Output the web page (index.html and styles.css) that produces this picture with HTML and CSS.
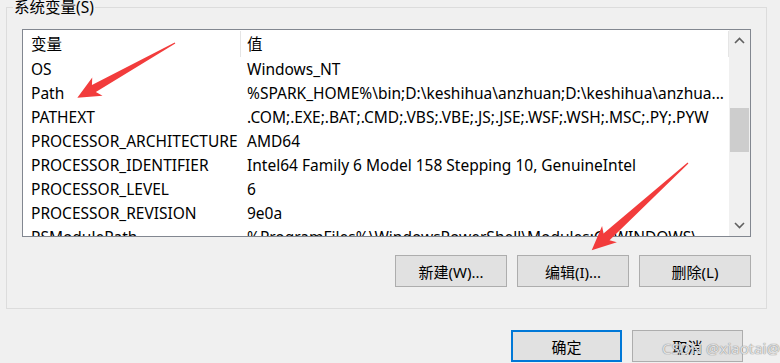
FILE: index.html
```html
<!DOCTYPE html>
<html lang="zh-CN">
<head>
    <meta charset="UTF-8">
    <title>环境变量</title>
    <link rel="stylesheet" href="styles.css">
</head>
<body>
    <!-- 系统变量 -->
    <fieldset class="group">
        <legend>系统变量(S)</legend>
        <div class="group-body">
            <div class="list">
                <div class="list-body">
                    <div class="row head"><span class="name">变量</span><span class="value">值</span></div>
                    <div class="row"><span class="name">OS</span><span class="value">Windows_NT</span></div>
                    <div class="row"><span class="name">Path</span><span class="value">%SPARK_HOME%\bin;D:\keshihua\anzhuan;D:\keshihua\anzhua...</span></div>
                    <div class="row"><span class="name">PATHEXT</span><span class="value">.COM;.EXE;.BAT;.CMD;.VBS;.VBE;.JS;.JSE;.WSF;.WSH;.MSC;.PY;.PYW</span></div>
                    <div class="row"><span class="name">PROCESSOR_ARCHITECTURE</span><span class="value">AMD64</span></div>
                    <div class="row"><span class="name">PROCESSOR_IDENTIFIER</span><span class="value">Intel64 Family 6 Model 158 Stepping 10, GenuineIntel</span></div>
                    <div class="row"><span class="name">PROCESSOR_LEVEL</span><span class="value">6</span></div>
                    <div class="row"><span class="name">PROCESSOR_REVISION</span><span class="value">9e0a</span></div>
                    <div class="row"><span class="name">PSModulePath</span><span class="value">%ProgramFiles%\WindowsPowerShell\Modules;C:\WINDOWS\...</span></div>
                </div>
                <div class="scrollbar">
                    <div class="arrow"><svg width="11" height="7" viewBox="0 0 11 7"><polyline points="1,6 5.5,1.5 10,6" /></svg></div>
                    <div class="thumb"></div>
                    <div class="arrow down"><svg width="11" height="7" viewBox="0 0 11 7"><polyline points="1,1 5.5,5.5 10,1" /></svg></div>
                </div>
            </div>

            <div class="actions">
                <button class="btn">新建(W)...</button>
                <button class="btn">编辑(I)...</button>
                <button class="btn">删除(L)</button>
            </div>
        </div>
    </fieldset>

    <!-- 确定 / 取消 -->
    <div class="footer">
        <button class="btn primary">确定</button>
        <button class="btn">取消</button>
    </div>

    <!-- annotations -->
    <svg class="marks" width="780" height="363">
        <polygon transform="translate(175 43) rotate(150.7)" points="0,-0.6 93,-4 89,-10.5 112,0 89,10.5 93,4 0,0.6" />
        <polygon transform="translate(688 163) rotate(137.8)" points="0,-0.6 110,-4.5 106,-11 130,0 106,11 110,4.5 0,0.6" />
    </svg>
    <div class="watermark">CSDN @xiaotai@</div>
</body>
</html>
```

FILE: styles.css
```css
* { box-sizing: border-box; margin: 0; padding: 0; }
body {
    font-family: 'Noto Sans', 'Noto Sans CJK SC', sans-serif;
    font-size: 15px;
    background-color: #f0f0f0;
    color: #000;
    width: 780px;
    height: 363px;
    overflow: hidden;
    position: relative;
}

.group { margin-left: 6px; width: 761px; border: 1px solid #dcdcdc; padding: 0; min-width: 0; }
.group legend { margin-left: 6px; padding: 0 1px; line-height: 15px; font-size: 15.5px; }
.group-body { padding: 14px 15px 21px 15px; }

.list { display: flex; width: 729px; height: 208px; border: 1px solid #828790; background-color: #fff; overflow: hidden; }
.list-body { width: 706px; overflow: hidden; font-size: 15.5px; }
.row { display: flex; height: 24px; align-items: center; white-space: nowrap; }
.row .name { width: 218px; flex-shrink: 0; padding-left: 8px; overflow: hidden; }
.row .value { flex: 1; padding-left: 6px; overflow: hidden; }
.row.head { height: 27px; }
.row.head .name, .row.head .value { height: 26px; line-height: 26px; border-right: 1px solid #e5e5e5; }

.scrollbar { width: 21px; background-color: #f0f0f0; display: flex; flex-direction: column; align-items: center; }
.arrow { height: 21px; width: 100%; display: flex; align-items: center; justify-content: center; }
.arrow.down { margin-top: auto; height: 22px; }
.arrow polyline { fill: none; stroke: #606060; stroke-width: 1.6; }
.thumb { width: 19px; height: 44px; margin-top: 57px; background-color: #cdcdcd; }

.actions { display: flex; justify-content: flex-end; gap: 10px; margin-top: 18px; }
.btn {
    width: 112px;
    height: 32px;
    font-family: inherit;
    font-size: 15px;
    color: #000;
    background-color: #e1e1e1;
    border: 1px solid #adadad;
}
.btn.primary { border: 2px solid #0078d7; }

.footer { display: flex; justify-content: flex-end; gap: 10px; margin-top: 21px; padding-right: 37px; }
.footer .btn { width: 111px; }

.marks { position: absolute; left: 0; top: 0; pointer-events: none; }
.marks polygon { fill: #f23c3c; }

.watermark {
    position: absolute;
    left: 662px;
    top: 338px;
    font-size: 15px;
    color: rgba(255, 255, 255, 0.75);
    text-shadow: 0 0 1px #8a8a8a, 0 0 1px #8a8a8a;
    pointer-events: none;
}
```
